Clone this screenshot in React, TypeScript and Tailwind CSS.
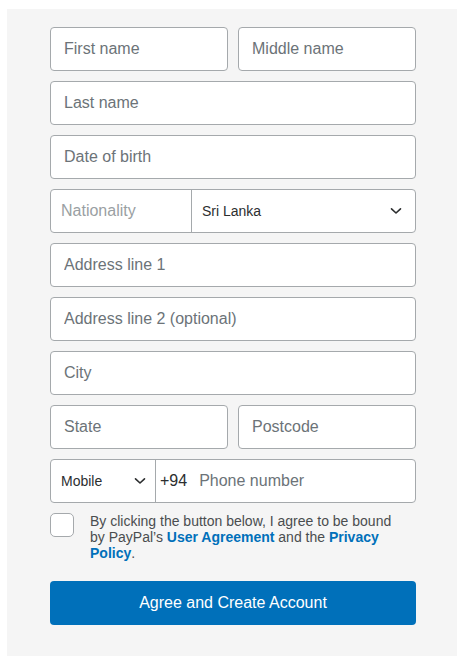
import { useState } from "react";

function Chevron({ className = "" }: { className?: string }) {
  return (
    <svg
      className={className}
      width="12"
      height="8"
      viewBox="0 0 12 8"
      fill="none"
      stroke="#2c2e2f"
      strokeWidth="1.6"
      aria-hidden="true"
    >
      <path d="M1.5 1.8l4.5 4.2 4.5-4.2" strokeLinecap="round" strokeLinejoin="round" />
    </svg>
  );
}

function TextField({ placeholder, className = "" }: { placeholder: string; className?: string }) {
  return (
    <input
      type="text"
      placeholder={placeholder}
      className={`h-[44px] w-full rounded-[4px] border border-[#a5a9ac] bg-white px-[13px] text-[16px] text-[#2c2e2f] outline-none placeholder:text-[#6c7378] ${className}`}
    />
  );
}

export default function App() {
  const [agreed, setAgreed] = useState(false);

  return (
    <div className="min-h-[656px] bg-white pt-[9px] pl-[7px] font-['Liberation_Sans',Arial,sans-serif]">
      <div className="w-[450px] min-h-[647px] bg-[#f5f5f5] pl-[43px] pr-[41px] pt-[18px]">
        <form className="flex flex-col gap-[10px]" onSubmit={(e) => e.preventDefault()}>
          <div className="grid grid-cols-2 gap-[10px]">
            <TextField placeholder="First name" />
            <TextField placeholder="Middle name" />
          </div>
          <TextField placeholder="Last name" />
          <TextField placeholder="Date of birth" />

          {/* nationality: label + select joined */}
          <div className="flex h-[44px] rounded-[4px] border border-[#a5a9ac] bg-white">
            <div className="flex w-[140px] items-center pl-[10px] text-[16px] text-[#9a9fa3]">Nationality</div>
            <div className="flex flex-1 items-center justify-between border-l border-[#a5a9ac] pl-[10px] pr-[13px]">
              <span className="text-[14px] text-[#2c2e2f]">Sri Lanka</span>
              <Chevron />
            </div>
          </div>

          <TextField placeholder="Address line 1" />
          <TextField placeholder="Address line 2 (optional)" />
          <TextField placeholder="City" />
          <div className="grid grid-cols-2 gap-[10px]">
            <TextField placeholder="State" />
            <TextField placeholder="Postcode" />
          </div>

          {/* phone */}
          <div className="flex h-[44px] rounded-[4px] border border-[#a5a9ac] bg-white">
            <div className="flex w-[105px] items-center justify-between border-r border-[#a5a9ac] pl-[10px] pr-[9px]">
              <span className="text-[14px] text-[#2c2e2f]">Mobile</span>
              <Chevron />
            </div>
            <div className="flex flex-1 items-center pl-[4px]">
              <span className="text-[16px] text-[#2c2e2f]">+94</span>
              <input
                type="tel"
                placeholder="Phone number"
                className="ml-[12px] w-full bg-transparent text-[16px] text-[#2c2e2f] outline-none placeholder:text-[#6c7378]"
              />
            </div>
          </div>

          <div className="flex gap-[16px]">
            <button
              type="button"
              onClick={() => setAgreed(!agreed)}
              className="h-[24px] w-[24px] shrink-0 rounded-[5px] border border-[#a5a9ac] bg-white"
              aria-pressed={agreed}
            />
            <p className="whitespace-nowrap text-[14px] leading-[16px] text-[#4a4d4f]">
              By clicking the button below, I agree to be bound
              <br />
              by PayPal’s <a href="#" className="font-bold text-[#0070ba]">User Agreement</a> and the{" "}
              <a href="#" className="font-bold text-[#0070ba]">
                Privacy
                <br />
                Policy
              </a>
              .
            </p>
          </div>

          <button
            type="submit"
            className="mt-[10px] h-[44px] w-full rounded-[4px] bg-[#0070ba] text-[16px] text-white"
          >
            Agree and Create Account
          </button>
        </form>
      </div>
    </div>
  );
}
